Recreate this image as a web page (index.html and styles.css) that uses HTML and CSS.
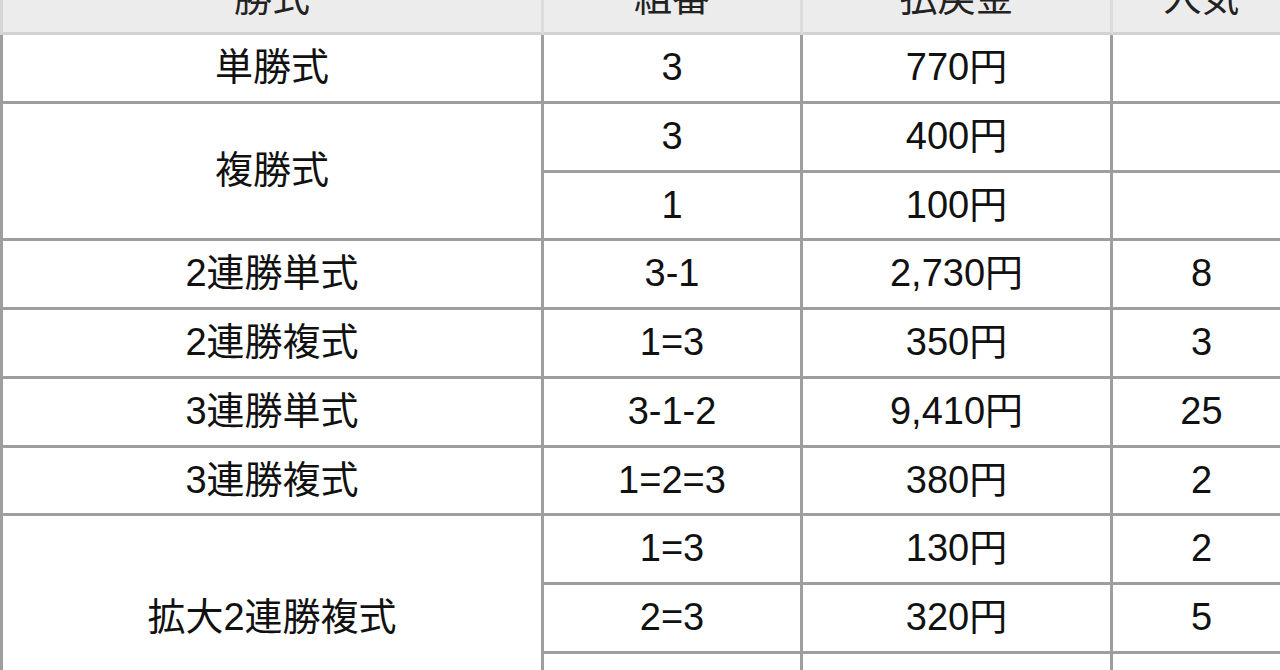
FILE: index.html
```html
<!DOCTYPE html>
<html lang="ja">
<head>
<meta charset="utf-8">
<title>払戻金</title>
<link rel="stylesheet" href="styles.css">
</head>
<body>
<div class="wrap">
<table class="pay">
<colgroup>
<col class="c1"><col class="c2"><col class="c3"><col class="c4">
</colgroup>
<thead>
<tr><th class="first">勝式</th><th>組番</th><th>払戻金</th><th>人気</th></tr>
</thead>
<tbody>
<tr><td class="first">単勝式</td><td>3</td><td>770円</td><td></td></tr>
<tr><td class="first" rowspan="2">複勝式</td><td>3</td><td>400円</td><td></td></tr>
<tr><td>1</td><td>100円</td><td></td></tr>
<tr><td class="first">2連勝単式</td><td>3-1</td><td>2,730円</td><td>8</td></tr>
<tr><td class="first">2連勝複式</td><td>1=3</td><td>350円</td><td>3</td></tr>
<tr><td class="first">3連勝単式</td><td>3-1-2</td><td>9,410円</td><td>25</td></tr>
<tr><td class="first">3連勝複式</td><td>1=2=3</td><td>380円</td><td>2</td></tr>
<tr><td class="first" rowspan="3">拡大2連勝複式</td><td>1=3</td><td>130円</td><td>2</td></tr>
<tr><td>2=3</td><td>320円</td><td>5</td></tr>
<tr><td>1=2</td><td>170円</td><td>1</td></tr>
</tbody>
</table>
</div>
</body>
</html>
```

FILE: styles.css
```css
html, body {
  margin: 0;
  padding: 0;
  background: #ffffff;
  overflow: hidden;
}

.wrap {
  width: 1280px;
  height: 670px;
  overflow: hidden;
}

.pay {
  border-collapse: separate;
  border-spacing: 0;
  table-layout: fixed;
  width: 1293px;
  margin-top: -34px;
  font-family: "Liberation Sans", "Noto Sans CJK JP", sans-serif;
  font-size: 38px;
  line-height: 1.2;
  color: #111111;
}

.c1 { width: 544px; }
.c2 { width: 259px; }
.c3 { width: 310px; }
.c4 { width: 180px; }

.pay th,
.pay td {
  box-sizing: border-box;
  padding: 0;
  text-align: center;
  vertical-align: middle;
  border-right: 3px solid #9e9e9e;
  border-bottom: 3px solid #9e9e9e;
  white-space: nowrap;
}

.pay td.first {
  border-left: 3px solid #9e9e9e;
}

.pay thead th {
  height: 69px;
  background: #ececec;
  font-weight: normal;
  color: #222222;
  border-right-color: #dcdcdc;
  border-bottom-color: #d2d2d2;
}

.pay thead th.first {
  border-left: 3px solid #d6d6d6;
}

.pay tbody tr {
  height: 68.75px;
}
```
